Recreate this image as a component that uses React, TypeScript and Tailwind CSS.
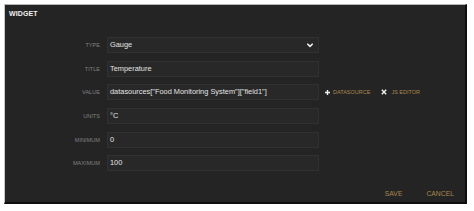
import React from "react";

const rows: { label: string; value: string; select?: boolean; extras?: boolean }[] = [
  { label: "TYPE", value: "Gauge", select: true },
  { label: "TITLE", value: "Temperature" },
  { label: "VALUE", value: 'datasources["Food Monitoring System"]["field1"]', extras: true },
  { label: "UNITS", value: "°C" },
  { label: "MINIMUM", value: "0" },
  { label: "MAXIMUM", value: "100" },
];

export default function App() {
  return (
    <div
      className="w-[474px] h-[211px] bg-white pt-[4px] pl-[4px]"
      style={{ fontFamily: '"Liberation Sans", Arial, sans-serif' }}
    >
      <div className="w-[463px] h-[200px] bg-[#242424] border-t border-l border-t-[#b5b5b5] border-l-[#c8c8c8] border-r-2 border-b-2 border-r-[#0e0e0e] border-b-[#0e0e0e] flex flex-col">
        <div className="pt-[5px] pl-[4px] text-[7px] leading-[8px] font-bold text-[#f2f2f2] tracking-[0.1px]">
          WIDGET
        </div>
        <div className="mt-[19px] flex flex-col gap-[7.7px]">
          {rows.map((r) => (
            <div key={r.label} className="flex items-center h-[16px]">
              <div className="w-[95px] text-right text-[5.6px] leading-[6px] text-[#808080]">{r.label}</div>
              <div className="ml-[7px] w-[212px] h-[16px] bg-[#282828] border border-[#313131] flex items-center justify-between pl-[2px] pr-[5px]">
                <span className="text-[7.4px] leading-[8px] text-[#e4e4e4] whitespace-nowrap">{r.value}</span>
                {r.select && (
                  <svg width="6" height="5" viewBox="0 0 6 5">
                    <path d="M0.8 1.2 L3 3.4 L5.2 1.2" stroke="#f0f0f0" strokeWidth="1.6" fill="none" strokeLinecap="round" />
                  </svg>
                )}
              </div>
              {r.extras && (
                <div className="flex items-center ml-[6px] text-[5.5px] leading-[6px] text-[#a8874f]">
                  <svg width="5" height="5" viewBox="0 0 5 5" className="mr-[3px]">
                    <path d="M2.5 0 V5 M0 2.5 H5" stroke="#f2f2f2" strokeWidth="1.4" />
                  </svg>
                  <span>DATASOURCE</span>
                  <svg width="6" height="6" viewBox="0 0 6 6" className="ml-[11px] mr-[4px]">
                    <path d="M0.8 0.8 L5.2 5.2 M5.2 0.8 L0.8 5.2" stroke="#f2f2f2" strokeWidth="1.4" />
                  </svg>
                  <span>JS EDITOR</span>
                </div>
              )}
            </div>
          ))}
        </div>
        <div className="mt-auto pb-[4px] flex justify-end pr-[11px] gap-[24px] text-[6.8px] leading-[8px] text-[#a8874f]">
          <span>SAVE</span>
          <span>CANCEL</span>
        </div>
      </div>
    </div>
  );
}
